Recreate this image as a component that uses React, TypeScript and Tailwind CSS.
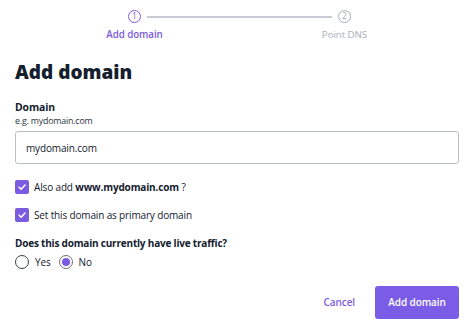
import { useState } from 'react';

const font = { fontFamily: '"Open Sans", "Noto Sans", sans-serif' };

function Check() {
  return (
    <span className="flex h-[14px] w-[14px] shrink-0 items-center justify-center rounded-[2px] bg-[#7b5ce0]">
      <svg viewBox="0 0 12 12" className="h-[10px] w-[10px]" fill="none" stroke="white" strokeWidth="1.8" strokeLinecap="round" strokeLinejoin="round">
        <path d="M2.5 6.2 5 8.6 9.6 3.6" />
      </svg>
    </span>
  );
}

function Radio({ checked }: { checked: boolean }) {
  return (
    <span
      className={
        checked
          ? 'flex h-[14px] w-[14px] items-center justify-center rounded-full border border-[#6b6f78]'
          : 'flex h-[14px] w-[14px] items-center justify-center rounded-full border border-[#3a3f48]'
      }
    >
      {checked && <span className="h-[8px] w-[8px] rounded-full bg-[#7b5ce0]" />}
    </span>
  );
}

export default function App() {
  const [live, setLive] = useState(false);

  return (
    <div className="h-[326px] w-[474px] bg-white text-[#14202e]" style={font}>
      {/* stepper */}
      <div className="flex justify-center pl-[5px] pt-[10px]">
        <div className="flex w-[13px] flex-col items-center">
          <span className="flex h-[13px] w-[13px] shrink-0 items-center justify-center rounded-full border border-[#7b5ce0] text-[8.5px] leading-none text-[#7b5ce0]">1</span>
          <span className="mt-[5px] whitespace-nowrap text-[9.8px] font-semibold leading-[14px] tracking-[-0.01em] text-[#7b5ce0]">Add domain</span>
        </div>
        <div className="mx-[6px] mt-[6px] h-[1.5px] w-[185px] bg-[#c7cbd4]" />
        <div className="flex w-[13px] flex-col items-center">
          <span className="flex h-[13px] w-[13px] shrink-0 items-center justify-center rounded-full border border-[#a9afbb] text-[8.5px] leading-none text-[#a9afbb]">2</span>
          <span className="mt-[5px] whitespace-nowrap text-[9.8px] leading-[14px] tracking-[-0.01em] text-[#a9afbb]">Point DNS</span>
        </div>
      </div>

      <div className="px-[15px]">
        <h1 className="mt-[17px] text-[19px] font-extrabold leading-[26px]">Add domain</h1>

        <div className="mt-[15px] text-[10.4px] font-bold leading-[14px] tracking-[-0.01em]">Domain</div>
        <div className="mt-[1px] text-[8.8px] leading-[12px] tracking-[-0.02em] text-[#2c3440]">e.g. mydomain.com</div>
        <input
          className="mt-[4px] h-[33px] w-full rounded-[3px] border border-[#b9bec7] px-[10px] text-[10px] tracking-[-0.015em] text-[#14202e] outline-none"
          defaultValue="mydomain.com"
          style={font}
        />

        <label className="mt-[16px] flex items-center gap-[5px] text-[10px] leading-[14px] tracking-[-0.015em]">
          <Check />
          <span>
            Also add <b className="font-bold">www.mydomain.com</b> ?
          </span>
        </label>
        <label className="mt-[14px] flex items-center gap-[5px] text-[10px] leading-[14px] tracking-[-0.015em]">
          <Check />
          <span>Set this domain as primary domain</span>
        </label>

        <div className="mt-[14px] text-[10px] font-bold leading-[14px] tracking-[-0.02em]">Does this domain currently have live traffic?</div>
        <div className="mt-[5px] flex items-center text-[10px] leading-[14px] tracking-[-0.015em]">
          <button className="flex items-center gap-[6px]" onClick={() => setLive(true)}>
            <Radio checked={live} />
            <span>Yes</span>
          </button>
          <button className="ml-[8px] flex items-center gap-[6px]" onClick={() => setLive(false)}>
            <Radio checked={!live} />
            <span>No</span>
          </button>
        </div>

        <div className="mt-[17px] flex items-center justify-end gap-[20px]">
          <button className="text-[10px] font-semibold tracking-[-0.01em] text-[#7b5ce0]">Cancel</button>
          <button className="h-[33px] w-[84px] rounded-[3px] bg-[#7b5ce6] text-[10px] font-semibold tracking-[-0.01em] text-white">Add domain</button>
        </div>
      </div>
    </div>
  );
}
